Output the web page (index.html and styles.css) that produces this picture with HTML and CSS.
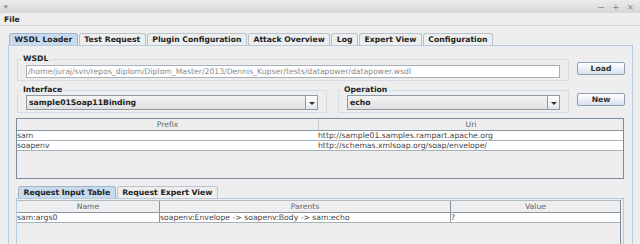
FILE: index.html
```html
<!DOCTYPE html>
<html>
<head>
    <title>WSDL Loader</title>
    <meta charset="UTF-8">
    <link rel="stylesheet" href="styles.css">
</head>
<body>
    <div class="titlebar">
        <span class="title-menu">&#9662;</span>
        <span class="title-controls"><span>&minus;</span><span>+</span><span>&times;</span></span>
    </div>
    <div class="menubar"><span class="menu-item">File</span></div>

    <div class="main">
        <div class="tabs">
            <div class="tab active">WSDL Loader</div>
            <div class="tab">Test Request</div>
            <div class="tab">Plugin Configuration</div>
            <div class="tab">Attack Overview</div>
            <div class="tab">Log</div>
            <div class="tab">Expert View</div>
            <div class="tab">Configuration</div>
        </div>
        <div class="panel">
            <div class="form-grid">
                <fieldset class="group wsdl-group">
                    <legend>WSDL</legend>
                    <div class="textfield">/home/juraj/svn/repos_diplom/Diplom_Master/2013/Dennis_Kupser/tests/datapower/datapower.wsdl</div>
                </fieldset>
                <div class="btn-cell"><button class="btn load-btn">Load</button></div>

                <div class="select-row">
                    <fieldset class="group">
                        <legend>Interface</legend>
                        <div class="combo"><span class="combo-value">sample01Soap11Binding</span><span class="combo-arrow"></span></div>
                    </fieldset>
                    <fieldset class="group">
                        <legend>Operation</legend>
                        <div class="combo"><span class="combo-value">echo</span><span class="combo-arrow"></span></div>
                    </fieldset>
                </div>
                <div class="btn-cell"><button class="btn new-btn">New</button></div>
            </div>

            <div class="table ns-table">
                <div class="thead ns-cols">
                    <div class="th">Prefix</div>
                    <div class="th">Uri</div>
                </div>
                <div class="tr ns-cols">
                    <div class="td">sam</div>
                    <div class="td">http://sample01.samples.rampart.apache.org</div>
                </div>
                <div class="tr ns-cols">
                    <div class="td">soapenv</div>
                    <div class="td">http://schemas.xmlsoap.org/soap/envelope/</div>
                </div>
            </div>

            <div class="splitter"></div>

            <div class="tabs sub-tabs">
                <div class="tab active">Request Input Table</div>
                <div class="tab">Request Expert View</div>
            </div>
            <div class="sub-panel">
                <div class="table req-table">
                    <div class="thead req-cols">
                        <div class="th">Name</div>
                        <div class="th">Parents</div>
                        <div class="th">Value</div>
                    </div>
                    <div class="tr req-cols">
                        <div class="td">sam:args0</div>
                        <div class="td">soapenv:Envelope -&gt; soapenv:Body -&gt; sam:echo</div>
                        <div class="td">?</div>
                    </div>
                </div>
            </div>
        </div>
    </div>
</body>
</html>
```

FILE: styles.css
```css
html, body {
    margin: 0;
    padding: 0;
    height: 244px;
    overflow: hidden;
}
body {
    font-family: 'DejaVu Sans', sans-serif;
    font-size: 7.7px;
    color: #222;
    background-color: #eeeeee;
}
.titlebar {
    height: 13px;
    background: linear-gradient(#ececec, #d6d6d6);
    display: flex;
    align-items: center;
    justify-content: space-between;
    padding: 0 6px 0 4px;
    color: #888;
}
.title-menu {
    font-size: 7px;
}
.title-controls {
    display: flex;
    gap: 7px;
    font-size: 9px;
}
.menubar {
    height: 12px;
    border-bottom: 1px solid #d4d4d4;
    display: flex;
    align-items: center;
    padding-left: 4px;
}
.menu-item {
    font-weight: bold;
}
.main {
    padding: 7px 7px 0 8px;
}
.tabs {
    display: flex;
    height: 12px;
    padding-left: 1px;
}
.tab {
    font-weight: bold;
    padding: 0 4.5px;
    line-height: 12px;
    border: 1px solid #b9c3cd;
    border-bottom: none;
    border-radius: 3px 3px 0 0;
    background: #eeeeee;
    margin-right: 1px;
}
.tab.active {
    background: #c8daee;
    border-color: #9fb5ca;
}
.panel {
    border: 1px solid #b6cbe0;
    border-bottom: none;
    height: 198px;
    padding: 0 8px 0 7px;
}
.form-grid {
    display: grid;
    grid-template-columns: 552px 48px;
    column-gap: 8px;
    row-gap: 5px;
    padding: 9px 0 0 1px;
}
.group {
    margin: 0;
    padding: 0 8px 2px 8px;
    border: 1px solid #d3dde8;
}
.group legend {
    font-weight: bold;
    padding: 0 2px;
    margin-left: -5px;
    line-height: 8px;
}
.textfield {
    height: 11px;
    line-height: 11px;
    background: #fff;
    border: 1px solid #a7afb8;
    color: #8a8a8a;
    padding-left: 1px;
    overflow: hidden;
    white-space: nowrap;
    margin-top: 2px;
}
.btn-cell {
    display: flex;
    align-items: center;
}
.btn {
    width: 48px;
    height: 13px;
    padding: 0;
    font-family: 'DejaVu Sans', sans-serif;
    font-size: 7.7px;
    font-weight: bold;
    color: #333;
    border: 1px solid #8e9eb0;
    border-radius: 2px;
    background: linear-gradient(#ffffff, #d8e2ee);
}
.select-row {
    display: grid;
    grid-template-columns: 310px 231px;
    column-gap: 11px;
}
.select-row .group {
    padding-bottom: 2px;
}
.combo {
    display: flex;
    height: 13px;
    border: 1px solid #8e9aa8;
    background: linear-gradient(#f4f4f4, #e0e0e0);
    margin-top: 1px;
}
.combo-value {
    flex: 1;
    font-weight: bold;
    padding-left: 2px;
    line-height: 13px;
}
.combo-arrow {
    width: 11px;
    border-left: 1px solid #8e9aa8;
    background: linear-gradient(#ffffff, #e4e8ee);
    position: relative;
}
.combo-arrow::after {
    content: '';
    position: absolute;
    left: 3px;
    top: 6px;
    border-left: 3px solid transparent;
    border-right: 3px solid transparent;
    border-top: 3px solid #333;
}
.table {
    border: 1px solid #7d8c9a;
    background: #eeeeee;
}
.ns-table {
    margin-top: 5px;
    height: 59px;
}
.thead {
    height: 11px;
    line-height: 11px;
    color: #666;
    border-bottom: 1px solid #8a96a2;
    text-align: center;
}
.tr {
    height: 9px;
    line-height: 9px;
    background: #fff;
    border-bottom: 1px solid #a8b0b8;
    color: #444;
    white-space: nowrap;
}
.ns-cols {
    display: grid;
    grid-template-columns: 301px 1fr;
}
.ns-cols .th + .th {
    border-left: 1px solid #c8c8c8;
}
.splitter {
    height: 3px;
    margin: 1px 0 3px 0;
    background-image: radial-gradient(#bbbbbb 0.6px, transparent 0.7px);
    background-size: 2px 2px;
}
.sub-tabs {
    padding-left: 2px;
}
.sub-panel {
    border: 1px solid #b6cbe0;
    border-bottom: none;
    height: 45px;
    padding: 1px 2px 0 0;
}
.req-table {
    border-top: none;
    border-left: none;
    border-bottom: none;
    height: 45px;
}
.req-cols {
    display: grid;
    grid-template-columns: 142px 291px 1fr;
}
.req-cols > div + div {
    border-left: 1px solid #8a96a2;
}
.req-table .thead {
    border-top: 1px solid #b0b8c0;
}
```
